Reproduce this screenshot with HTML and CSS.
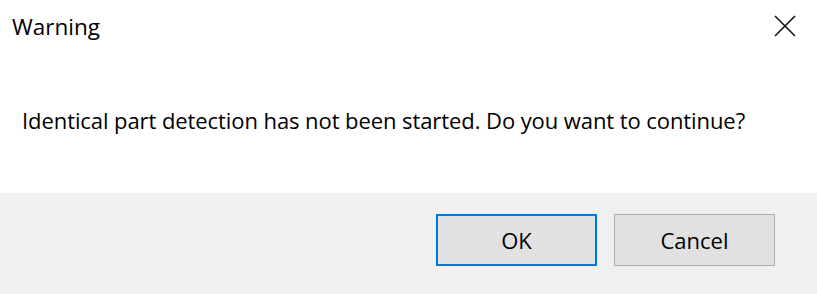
FILE: index.html
```html
<!DOCTYPE html>
<html lang="en">
<head>
<meta charset="utf-8">
<title>Warning</title>
<link rel="stylesheet" href="styles.css">
</head>
<body>
<div class="dialog">
  <div class="titlebar">
    <div class="title">Warning</div>
    <div class="close" aria-label="Close">
      <svg width="22" height="22" viewBox="0 0 22 22"><path d="M1 1 L21 21 M21 1 L1 21" stroke="#111" stroke-width="1.6" fill="none"/></svg>
    </div>
  </div>
  <div class="content">
    <p class="message">Identical part detection has not been started. Do you want to continue?</p>
  </div>
  <div class="footer">
    <button class="btn btn-default">OK</button>
    <button class="btn">Cancel</button>
  </div>
</div>
</body>
</html>
```
FILE: styles.css
```css
html, body {
  margin: 0;
  padding: 0;
  background: #ffffff;
}
body {
  font-family: "Open Sans", "Noto Sans", sans-serif;
  color: #000;
}
.dialog {
  width: 817px;
  height: 294px;
  display: flex;
  flex-direction: column;
}
.titlebar {
  height: 54px;
  display: flex;
  justify-content: space-between;
  align-items: flex-start;
}
.title {
  padding-left: 12px;
  font-size: 22.5px;
  line-height: 54px;
}
.close {
  width: 64px;
  height: 52px;
  display: flex;
  align-items: center;
  justify-content: center;
}
.close svg { display: block; }
.content {
  height: 139px;
  box-sizing: border-box;
  padding-top: 51px;
}
.message {
  margin: 0;
  padding-left: 22px;
  font-size: 22px;
  line-height: 30px;
  letter-spacing: -0.08px;
}
.footer {
  flex: 1;
  background: #f0f0f0;
  display: flex;
  justify-content: flex-end;
  align-items: flex-start;
  gap: 17px;
  padding: 21px 42px 0 0;
}
.btn {
  width: 161px;
  height: 52px;
  box-sizing: border-box;
  background: #e1e1e1;
  border: 1px solid #adadad;
  font-family: "Open Sans", "Noto Sans", sans-serif;
  font-size: 22px;
  color: #000;
  padding: 0;
  margin: 0;
}
.btn-default {
  border: 2px solid #0078d7;
}
```
